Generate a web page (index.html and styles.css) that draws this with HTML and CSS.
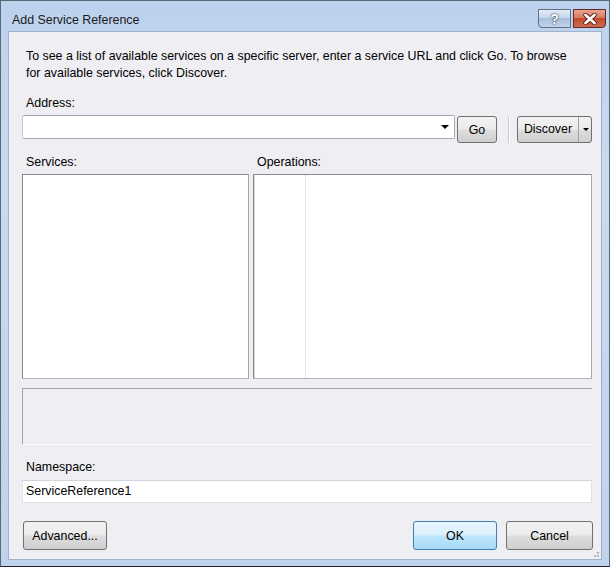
FILE: index.html
```html
<!DOCTYPE html>
<html lang="en">
<head>
<meta charset="UTF-8">
<title>Add Service Reference</title>
<link rel="stylesheet" href="styles.css">
</head>
<body>

<div class="window">
  <div class="titlebar">
    <span class="title">Add Service Reference</span>
    <div class="caption-buttons">
      <div class="cap-btn help">?</div>
      <div class="cap-btn close">
        <svg width="14" height="12" viewBox="0 0 14 12">
          <path d="M2.5 2 L11.5 10 M11.5 2 L2.5 10" stroke="#5a1a10" stroke-width="4.4" stroke-linecap="round"/>
          <path d="M2.5 2 L11.5 10 M11.5 2 L2.5 10" stroke="#fff" stroke-width="2.8" stroke-linecap="round"/>
        </svg>
      </div>
    </div>
  </div>

  <div class="client">
    <div class="intro">
      To see a list of available services on a specific server, enter a service URL and click Go. To browse<br>
      for available services, click Discover.
    </div>

    <div class="label address-label">Address:</div>
    <div class="address-row">
      <div class="combo">
        <span class="combo-arrow"></span>
      </div>
      <div class="btn go">Go</div>
      <div class="sep"></div>
      <div class="btn split">
        <span class="split-main">Discover</span>
        <span class="split-arrow"></span>
      </div>
    </div>

    <div class="lists-head">
      <div class="label services-label">Services:</div>
      <div class="label">Operations:</div>
    </div>
    <div class="lists">
      <div class="listbox services"></div>
      <div class="listbox operations">
        <div class="ops-col"></div>
      </div>
    </div>

    <div class="description"></div>

    <div class="label ns-label">Namespace:</div>
    <div class="textbox">ServiceReference1</div>

    <div class="footer">
      <div class="btn advanced">Advanced...</div>
      <div class="footer-right">
        <div class="btn default ok">OK</div>
        <div class="btn cancel">Cancel</div>
      </div>
    </div>

    <div class="grip"></div>
  </div>
</div>

</body>
</html>
```

FILE: styles.css
```css
body {
  margin: 0;
  background: #fff;
  font-family: "Liberation Sans", Arial, sans-serif;
  font-size: 12.4px;
  color: #000;
}

.window {
  width: 608px;
  height: 565px;
  border: 1px solid #5b6878;
  border-bottom-color: #222;
  background: linear-gradient(to bottom, #bcd1ec 0%, #c9dbf0 30%, #bfd3ec 100%);
  display: flex;
  flex-direction: column;
}

.titlebar {
  height: 30px;
  display: flex;
  justify-content: space-between;
}

.title {
  padding: 12px 0 0 11px;
  color: #1a1a1a;
}

.caption-buttons {
  display: flex;
  gap: 2px;
  margin: 8px 3px 0 0;
}

.cap-btn {
  height: 17px;
  border: 1px solid #5f6f84;
  display: flex;
  align-items: center;
  justify-content: center;
}

.help {
  width: 31px;
  border-radius: 0 0 0 4px;
  background: linear-gradient(to bottom, #e2ebf6 0%, #c7d6ea 45%, #aabfdb 50%, #c2d4ea 100%);
  color: #fff;
  font-weight: bold;
  font-size: 14px;
  text-shadow: 0 0 2px #2a3a50, 0 0 1px #2a3a50;
}

.close {
  width: 31px;
  border-color: #5e2a20;
  border-radius: 0 0 4px 0;
  background: linear-gradient(to bottom, #e8a593 0%, #d77a64 45%, #c44a2c 50%, #d36a4e 100%);
}

.client {
  flex: 1;
  margin: 0 7px 6px 7px;
  border: 1px solid #9fb2cb;
  background: #efeff3;
  padding: 0 7px 0 13px;
  position: relative;
}

.intro {
  margin-top: 16px;
  padding-left: 4px;
  line-height: 17px;
}

.label {
  line-height: 17px;
  padding-left: 4px;
}

.address-label {
  margin-top: 13px;
}

.address-row {
  display: flex;
  align-items: center;
  height: 29px;
  margin-top: 3px;
}

.combo {
  width: 433px;
  height: 24px;
  box-sizing: border-box;
  border: 1px solid #abadb3;
  border-top-color: #9aa4b4;
  border-left-color: #c2cbd8;
  background: #fff;
  border-radius: 2px;
  position: relative;
  margin-top: -5px;
}

.combo-arrow {
  position: absolute;
  right: 5px;
  top: 9px;
  border-left: 4px solid transparent;
  border-right: 4px solid transparent;
  border-top: 4px solid #000;
}

.btn {
  box-sizing: border-box;
  height: 27px;
  border: 1px solid #707070;
  border-radius: 3px;
  background: linear-gradient(to bottom, #f2f2f2 0%, #ebebeb 48%, #dddddd 52%, #cfcfcf 100%);
  display: flex;
  align-items: center;
  justify-content: center;
}

.go {
  width: 40px;
  margin-left: 2px;
}

.sep {
  width: 1px;
  height: 26px;
  background: #c8c8c8;
  border-right: 1px solid #fff;
  margin: 0 7px 0 11px;
}

.split {
  width: 75px;
  justify-content: flex-start;
}

.split-main {
  flex: 1;
  text-align: center;
  border-right: 1px solid #a0a0a0;
  line-height: 25px;
}

.split-arrow {
  width: 12px;
  position: relative;
  height: 25px;
}

.split-arrow::after {
  content: "";
  position: absolute;
  left: 4px;
  top: 11px;
  border-left: 3px solid transparent;
  border-right: 3px solid transparent;
  border-top: 3px solid #000;
}

.lists-head {
  display: flex;
  margin-top: 10px;
}

.services-label {
  width: 227px;
}

.lists {
  display: flex;
  gap: 4px;
  margin-top: 3px;
  height: 205px;
}

.listbox {
  box-sizing: border-box;
  background: #fff;
  border: 1px solid #8a8a8a;
  border-right-color: #a8a8a8;
  border-bottom-color: #b4b4b4;
}

.services {
  width: 227px;
}

.operations {
  width: 339px;
  box-shadow: inset 1px 0 0 #d8d8d8;
  padding-left: 51px;
}

.ops-col {
  height: 100%;
  border-left: 1px dotted #c3d3e6;
}

.description {
  margin-top: 9px;
  width: 570px;
  height: 57px;
  box-sizing: border-box;
  border-top: 1px solid #a2a2a2;
  border-left: 1px solid #a2a2a2;
  border-bottom: 1px solid #fafafa;
}

.ns-label {
  margin-top: 14px;
}

.textbox {
  box-sizing: border-box;
  width: 570px;
  height: 23px;
  margin-top: 4px;
  border: 1px solid #e2e3ea;
  border-top-color: #d0d4dc;
  background: #fff;
  padding-left: 3px;
  line-height: 20px;
}

.footer {
  display: flex;
  justify-content: space-between;
  margin-top: 18px;
  width: 571px;
}

.footer-right {
  display: flex;
  gap: 9px;
}

.advanced {
  width: 84px;
  height: 29px;
  margin-left: 1px;
}

.ok,
.cancel {
  height: 29px;
}

.ok {
  width: 84px;
}

.cancel {
  width: 87px;
}

.default {
  border-color: #3c7fb1;
  background: linear-gradient(to bottom, #eaf6fd 0%, #d9f0fc 48%, #bee6fd 52%, #a7d9f5 100%);
}

.grip {
  position: absolute;
  right: 2px;
  bottom: 2px;
  width: 2px;
  height: 2px;
  background: #b8b8b8;
  box-shadow: -3px 0 0 #b8b8b8, 0 -3px 0 #b8b8b8;
}
```
